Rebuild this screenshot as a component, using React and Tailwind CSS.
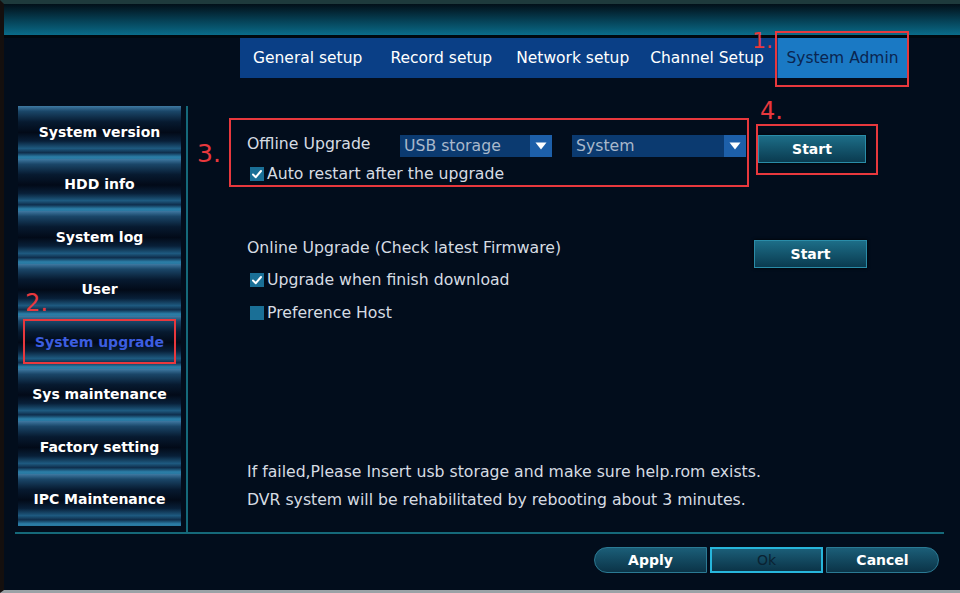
import React from 'react';

const tabs = [
  { label: 'General setup', ml: 'ml-0' },
  { label: 'Record setup', ml: 'ml-[28px]' },
  { label: 'Network setup', ml: 'ml-[24px]' },
  { label: 'Channel Setup', ml: 'ml-[21px]' },
];

const menu = [
  'System version',
  'HDD info',
  'System log',
  'User',
  'System upgrade',
  'Sys maintenance',
  'Factory setting',
  'IPC Maintenance',
];

const Check = ({ checked }) => (
  <span className="w-[14px] h-[14px] bg-[#1a6f96] flex items-center justify-center shrink-0">
    {checked && (
      <svg width="12" height="12" viewBox="0 0 12 12">
        <path d="M2 6.5 L4.8 9.2 L10 3" fill="none" stroke="#ffffff" strokeWidth="2" strokeLinecap="round" strokeLinejoin="round" />
      </svg>
    )}
  </span>
);

const Select = ({ value, width }) => (
  <div className={`h-[22px] bg-[#0b3a70] flex items-center justify-between ${width}`}>
    <span className="pl-[4px] text-[#a9b8cb]">{value}</span>
    <span className="w-[22px] h-[22px] bg-[#1d5fa9] flex items-center justify-center">
      <svg width="12" height="8" viewBox="0 0 12 8">
        <path d="M0.5 0.5 H11.5 L6 7.5 Z" fill="#ffffff" />
      </svg>
    </span>
  </div>
);

const StartButton = ({ width }) => (
  <button className={`h-[28px] ${width} bg-gradient-to-b from-[#1d6e88] to-[#0a3b50] border border-[#2a8ca8] text-white font-bold text-[14px] shadow-[0_0_3px_#000] shrink-0`}>
    Start
  </button>
);

const Note = ({ children, className }) => (
  <span className={`absolute text-[#e8383d] leading-none ${className}`}>{children}</span>
);

const Box = ({ className }) => (
  <div className={`absolute border-2 border-[#e8383d] ${className}`} />
);

export default function App() {
  return (
    <div
      className="w-[960px] h-[593px] bg-[#020d1c] relative overflow-hidden border-l-[4px] border-l-[#140f0e] border-t-[4px] border-t-[#1e3a3c] border-b-[3px] border-b-[#9aa2a6] flex flex-col"
      style={{ fontFamily: '"DejaVu Sans", Verdana, sans-serif' }}
    >
      {/* title bar */}
      <div className="h-[31px] bg-gradient-to-b from-[#021019] via-[#053e52] to-[#0a6c8a] shrink-0" />
      <div className="h-[3px] bg-[#01080f] shrink-0" />

      {/* tabs */}
      <div className="flex ml-[236px] h-[40px] shrink-0">
        <div className="flex items-center pt-[1px] bg-[#0a3f86] w-[538px] pl-[13px] text-white text-[15.5px] whitespace-nowrap">
          {tabs.map((t) => (
            <span key={t.label} className={t.ml}>{t.label}</span>
          ))}
        </div>
        <div className="flex items-center justify-center pt-[1px] bg-[#1a79c4] w-[129px] text-[#0a2550] text-[15.5px] whitespace-nowrap">
          System Admin
        </div>
      </div>

      {/* body */}
      <div className="flex mt-[28px] ml-[14px] mr-[18px] flex-1">
        <div className="w-[163px] flex flex-col shrink-0">
          {menu.map((m) => (
            <div
              key={m}
              className={`h-[52.5px] flex items-center justify-center text-[14px] font-bold bg-[linear-gradient(to_bottom,#3f79a2_0%,#1a4668_10%,#071a30_30%,#020a18_50%,#081f38_66%,#1e5a80_80%,#0f2e4c_88%,#2b7ea8_96%,#2a78a0_100%)] ${
                m === 'System upgrade' ? 'text-[#3c5ee0]' : 'text-white'
              }`}
            >
              {m}
            </div>
          ))}
        </div>
        <div className="w-[2px] bg-[#15697a] ml-[5px] mb-[-6px]" />

        <div className="flex-1 pl-[59px] text-[15.7px] text-[#d6dce3] flex flex-col whitespace-nowrap">
          <div className="flex items-start mt-[29px]">
            <span className="w-[153px] leading-[18px]">Offline Upgrade</span>
            <Select value="USB storage" width="w-[152px]" />
            <div className="w-[20px]" />
            <Select value="System" width="w-[174px]" />
            <div className="w-[12px]" />
            <StartButton width="w-[108px]" />
          </div>
          <div className="flex items-center gap-[3px] ml-[3px] mt-[2px] h-[18px]">
            <Check checked />
            <span>Auto restart after the upgrade</span>
          </div>

          <div className="flex items-start mt-[57px] h-[28px]">
            <span className="w-[507px] leading-[16px]">Online Upgrade (Check latest Firmware)</span>
            <StartButton width="w-[113px]" />
          </div>
          <div className="flex items-center gap-[3px] ml-[3px] mt-[2px] h-[20px]">
            <Check checked />
            <span>Upgrade when finish download</span>
          </div>
          <div className="flex items-center gap-[3px] ml-[3px] mt-[13px] h-[20px]">
            <Check />
            <span>Preference Host</span>
          </div>

          <div className="mt-[140px] flex flex-col gap-[10px] leading-[18px]">
            <span>If failed,Please Insert usb storage and make sure help.rom exists.</span>
            <span>DVR system will be rehabilitated by rebooting about 3 minutes.</span>
          </div>
        </div>
      </div>

      {/* bottom line */}
      <div className="h-[2px] bg-[#15697a] ml-[11px] mr-[16px] mt-[6px] shrink-0" />

      {/* bottom buttons */}
      <div className="flex justify-end mr-[21px] mt-[13px] mb-[19px] h-[26px] gap-[3px] text-[14px] font-bold shrink-0">
        <button className="w-[113px] rounded-l-[13px] bg-gradient-to-b from-[#1b5e78] to-[#0b3448] border border-[#2b7a94] text-white">
          Apply
        </button>
        <button className="w-[113px] bg-gradient-to-b from-[#1b5e78] to-[#0b3448] border-2 border-[#27b6dc] text-[#0a2232] font-normal">
          Ok
        </button>
        <button className="w-[113px] rounded-r-[13px] bg-gradient-to-b from-[#1b5e78] to-[#0b3448] border border-[#2b7a94] text-white">
          Cancel
        </button>
      </div>

      {/* annotations */}
      <Note className="left-[748px] top-[26px] text-[22px]">1.</Note>
      <Box className="left-[771px] top-[27px] w-[134px] h-[56px]" />
      <Note className="left-[21px] top-[287px] text-[24px]">2.</Note>
      <Box className="left-[19px] top-[315px] w-[153px] h-[45px]" />
      <Note className="left-[193px] top-[137px] text-[25px]">3.</Note>
      <Box className="left-[225px] top-[114px] w-[520px] h-[69px]" />
      <Note className="left-[756px] top-[95px] text-[24px]">4.</Note>
      <Box className="left-[752px] top-[120px] w-[122px] h-[51px]" />
    </div>
  );
}
